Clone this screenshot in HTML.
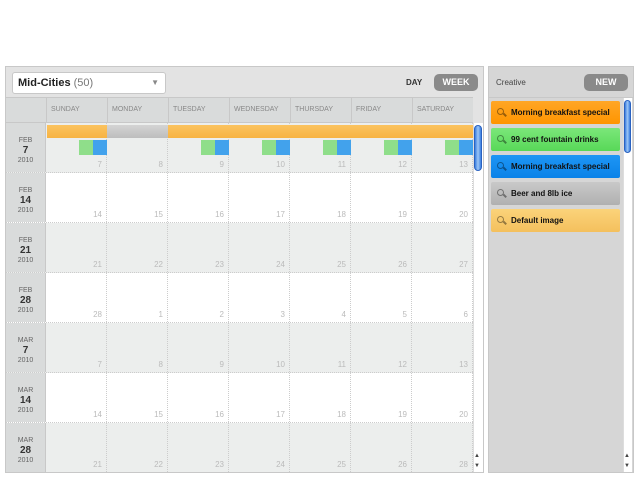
<!DOCTYPE html>
<html><head><meta charset="utf-8"><style>
*{box-sizing:border-box;margin:0;padding:0}
body{width:638px;height:479px;background:#fff;font-family:"Liberation Sans",Arial,sans-serif;position:relative;overflow:hidden}
.a{position:absolute}
#L{left:5px;top:66px;width:479px;height:407px;background:#e3e3e3;border:1px solid #c8c8c8}
#R{left:488px;top:66px;width:146px;height:407px;background:#d6d6d6;border:1px solid #c8c8c8}
.sel{left:6px;top:5px;width:154px;height:22px;background:#fff;border:1px solid #c8c8c8;border-radius:3px;font-size:11px;font-weight:bold;line-height:20px;padding-left:5px;color:#222}
.sel span{font-weight:normal;color:#777}
.btn{background:#8a8a8a;color:#fff;font-size:9px;font-weight:bold;border-radius:5px;text-align:center;line-height:17px;height:17px}
.hd{left:0;top:30px;width:467px;height:26px;background:#d9dbdb;border-top:1px solid #c8c8c8;border-bottom:1px solid #c8c8c8}
.hd div{position:absolute;top:0;height:24px;line-height:24px;font-size:7px;color:#888;padding-left:4px;border-left:1px solid #c8c8c8}
.row{position:absolute;left:0;width:467px;border-bottom:1px dotted #ccc}
.lab{position:absolute;left:0;top:0;width:40px;height:100%;background:#d9dbdb;text-align:center;font-size:7px;color:#666;padding-top:13px;line-height:9px;border-right:1px solid #c8c8c8}
.lab b{font-size:10px;color:#333;display:block;line-height:11px}
.c{position:absolute;top:0;height:100%;width:61px;border-right:1px dotted #ccc}
.c i{position:absolute;right:4px;bottom:3px;font-style:normal;font-size:8px;color:#bbb}
.g{background:#eceeed}.w{background:#fff}
.it{position:absolute;left:2px;width:129px;height:23px;border-radius:2px;font-size:8px;font-weight:bold;color:#111;line-height:23px;padding-left:20px}
.it:before{content:"";position:absolute;left:6px;top:7px;width:5px;height:5px;border:1.3px solid rgba(0,0,0,.4);border-radius:50%}
.it:after{content:"";position:absolute;left:12px;top:13px;width:4px;height:1.5px;background:rgba(0,0,0,.4);transform:rotate(45deg)}
.sb{background:#fff;border-left:1px solid #ddd}
.th{background:linear-gradient(90deg,#3a7ee0,#9cc6f5,#3a7ee0);border:1px solid #2a62c0;border-radius:4px}
</style></head><body>
<div id="L" class="a">
<div class="a sel">Mid-Cities <span>(50)</span><span style="position:absolute;right:6px;top:0;color:#888;font-size:8px">▼</span></div>
<div class="a" style="left:400px;top:11px;font-size:8px;font-weight:bold;color:#333">DAY</div>
<div class="a btn" style="left:428px;top:7px;width:44px">WEEK</div>
<div class="a hd">
<div style="left:40px;width:61px">SUNDAY</div><div style="left:101px;width:61px">MONDAY</div><div style="left:162px;width:61px">TUESDAY</div><div style="left:223px;width:61px">WEDNESDAY</div><div style="left:284px;width:61px">THURSDAY</div><div style="left:345px;width:61px">FRIDAY</div><div style="left:406px;width:61px">SATURDAY</div>
</div>

<div class="row g" style="top:56px;height:50px"><div class="lab">FEB<b>7</b>2010</div>
<div class="c" style="left:40px"><i>7</i></div><div class="c" style="left:101px"><i>8</i></div><div class="c" style="left:162px"><i>9</i></div><div class="c" style="left:223px"><i>10</i></div><div class="c" style="left:284px"><i>11</i></div><div class="c" style="left:345px"><i>12</i></div><div class="c" style="left:406px"><i>13</i></div>
<div class="a" style="left:41px;top:2px;width:60px;height:13px;background:linear-gradient(#fbc35f,#f7b342)"></div>
<div class="a" style="left:101px;top:2px;width:61px;height:13px;background:linear-gradient(#d4d4d4,#bdbdbd)"></div>
<div class="a" style="left:162px;top:2px;width:305px;height:13px;background:linear-gradient(#fbc35f,#f7b342)"></div>
<div class="a" style="left:73px;top:17px;width:14px;height:15px;background:#8fde8a"></div><div class="a" style="left:87px;top:17px;width:14px;height:15px;background:#42a2ec"></div>
<div class="a" style="left:195px;top:17px;width:14px;height:15px;background:#8fde8a"></div><div class="a" style="left:209px;top:17px;width:14px;height:15px;background:#42a2ec"></div>
<div class="a" style="left:256px;top:17px;width:14px;height:15px;background:#8fde8a"></div><div class="a" style="left:270px;top:17px;width:14px;height:15px;background:#42a2ec"></div>
<div class="a" style="left:317px;top:17px;width:14px;height:15px;background:#8fde8a"></div><div class="a" style="left:331px;top:17px;width:14px;height:15px;background:#42a2ec"></div>
<div class="a" style="left:378px;top:17px;width:14px;height:15px;background:#8fde8a"></div><div class="a" style="left:392px;top:17px;width:14px;height:15px;background:#42a2ec"></div>
<div class="a" style="left:439px;top:17px;width:14px;height:15px;background:#8fde8a"></div><div class="a" style="left:453px;top:17px;width:14px;height:15px;background:#42a2ec"></div>
</div>
<div class="row w" style="top:106px;height:50px"><div class="lab">FEB<b>14</b>2010</div>
<div class="c" style="left:40px"><i>14</i></div><div class="c" style="left:101px"><i>15</i></div><div class="c" style="left:162px"><i>16</i></div><div class="c" style="left:223px"><i>17</i></div><div class="c" style="left:284px"><i>18</i></div><div class="c" style="left:345px"><i>19</i></div><div class="c" style="left:406px"><i>20</i></div></div>
<div class="row g" style="top:156px;height:50px"><div class="lab">FEB<b>21</b>2010</div>
<div class="c" style="left:40px"><i>21</i></div><div class="c" style="left:101px"><i>22</i></div><div class="c" style="left:162px"><i>23</i></div><div class="c" style="left:223px"><i>24</i></div><div class="c" style="left:284px"><i>25</i></div><div class="c" style="left:345px"><i>26</i></div><div class="c" style="left:406px"><i>27</i></div></div>
<div class="row w" style="top:206px;height:50px"><div class="lab">FEB<b>28</b>2010</div>
<div class="c" style="left:40px"><i>28</i></div><div class="c" style="left:101px"><i>1</i></div><div class="c" style="left:162px"><i>2</i></div><div class="c" style="left:223px"><i>3</i></div><div class="c" style="left:284px"><i>4</i></div><div class="c" style="left:345px"><i>5</i></div><div class="c" style="left:406px"><i>6</i></div></div>
<div class="row g" style="top:256px;height:50px"><div class="lab">MAR<b>7</b>2010</div>
<div class="c" style="left:40px"><i>7</i></div><div class="c" style="left:101px"><i>8</i></div><div class="c" style="left:162px"><i>9</i></div><div class="c" style="left:223px"><i>10</i></div><div class="c" style="left:284px"><i>11</i></div><div class="c" style="left:345px"><i>12</i></div><div class="c" style="left:406px"><i>13</i></div></div>
<div class="row w" style="top:306px;height:50px"><div class="lab">MAR<b>14</b>2010</div>
<div class="c" style="left:40px"><i>14</i></div><div class="c" style="left:101px"><i>15</i></div><div class="c" style="left:162px"><i>16</i></div><div class="c" style="left:223px"><i>17</i></div><div class="c" style="left:284px"><i>18</i></div><div class="c" style="left:345px"><i>19</i></div><div class="c" style="left:406px"><i>20</i></div></div>
<div class="row g" style="top:356px;height:49px;border-bottom:none"><div class="lab">MAR<b>28</b>2010</div>
<div class="c" style="left:40px"><i>21</i></div><div class="c" style="left:101px"><i>22</i></div><div class="c" style="left:162px"><i>23</i></div><div class="c" style="left:223px"><i>24</i></div><div class="c" style="left:284px"><i>25</i></div><div class="c" style="left:345px"><i>26</i></div><div class="c" style="left:406px"><i>28</i></div></div>

<div class="a sb" style="left:467px;top:56px;width:10px;height:349px"></div>
<div class="a th" style="left:468px;top:58px;width:8px;height:46px"></div>
<div class="a" style="left:468px;top:384px;font-size:6px;color:#444;line-height:10px">▲<br>▼</div>
</div>

<div id="R" class="a">
<div class="a" style="left:7px;top:11px;font-size:8px;color:#444">Creative</div>
<div class="a btn" style="left:95px;top:7px;width:44px">NEW</div>
<div class="a" style="left:0;top:30px;width:144px;border-top:1px solid #c8c8c8"></div>
<div class="it" style="top:34px;background:linear-gradient(#ffa626,#ff9500)">Morning breakfast special</div>
<div class="it" style="top:61px;background:linear-gradient(#7be77a,#58d858)">99 cent fountain drinks</div>
<div class="it" style="top:88px;background:linear-gradient(#1e96f5,#0a82e8)">Morning breakfast special</div>
<div class="it" style="top:115px;background:linear-gradient(#c9c9c9,#b0b0b0)">Beer and 8lb ice</div>
<div class="it" style="top:142px;background:linear-gradient(#fbd37a,#f4c05d)">Default image</div>
<div class="a sb" style="left:134px;top:31px;width:9px;height:374px"></div>
<div class="a th" style="left:135px;top:33px;width:7px;height:53px"></div>
<div class="a" style="left:135px;top:384px;font-size:6px;color:#444;line-height:10px">▲<br>▼</div>
</div>
</body></html>
